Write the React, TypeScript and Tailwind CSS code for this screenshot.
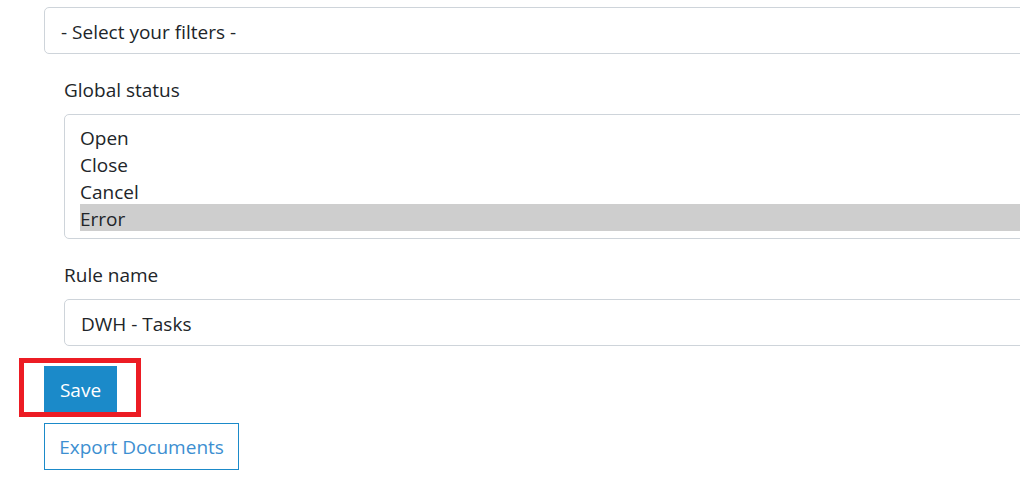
import React from "react";

const font = { fontFamily: '"Open Sans", "Noto Sans", Arial, sans-serif' };

export default function App() {
  const statuses = ["Open", "Close", "Cancel", "Error"];

  return (
    <div
      className="relative w-[1020px] h-[503px] overflow-hidden bg-white text-[19px] leading-[27px] text-[#212529]"
      style={font}
    >
      <div className="w-[1100px] pl-[44px] pt-[7px]">
        {/* filter picker */}
        <div className="h-[47px] border border-[#ced4da] rounded-[5px] px-[16px] pt-[3px] flex items-center">
          - Select your filters -
        </div>

        <div className="pl-[20px] pt-[23px]">
          <label className="block mb-[10px]">Global status</label>
          <div className="h-[125px] border border-[#ced4da] rounded-[5px] pl-[15px] pt-[8px]">
            {statuses.map((s) => (
              <div
                key={s}
                className={
                  s === "Error"
                    ? "h-[27px] leading-[31px] bg-[#cecece]"
                    : "h-[27px] leading-[31px]"
                }
              >
                {s}
              </div>
            ))}
          </div>

          <label className="block mt-[23px] mb-[10px]">Rule name</label>
          <div className="h-[47px] border border-[#ced4da] rounded-[5px] px-[16px] pt-[3px] flex items-center">
            DWH - Tasks
          </div>
        </div>

        <div className="pt-[20px] flex flex-col items-start gap-[11px]">
          <button className="h-[46px] w-[73px] bg-[#1b8ac9] text-white pt-[2px] flex items-center justify-center">
            Save
          </button>
          <button className="h-[47px] w-[195px] border border-[#1b8ac9] text-[#3d8fd1] pt-[2px] flex items-center justify-center">
            Export Documents
          </button>
        </div>
      </div>

      {/* highlight around the save button */}
      <div className="absolute left-[19px] top-[358px] w-[122px] h-[59px] border-[5px] border-[#ec1c24] pointer-events-none" />
    </div>
  );
}
